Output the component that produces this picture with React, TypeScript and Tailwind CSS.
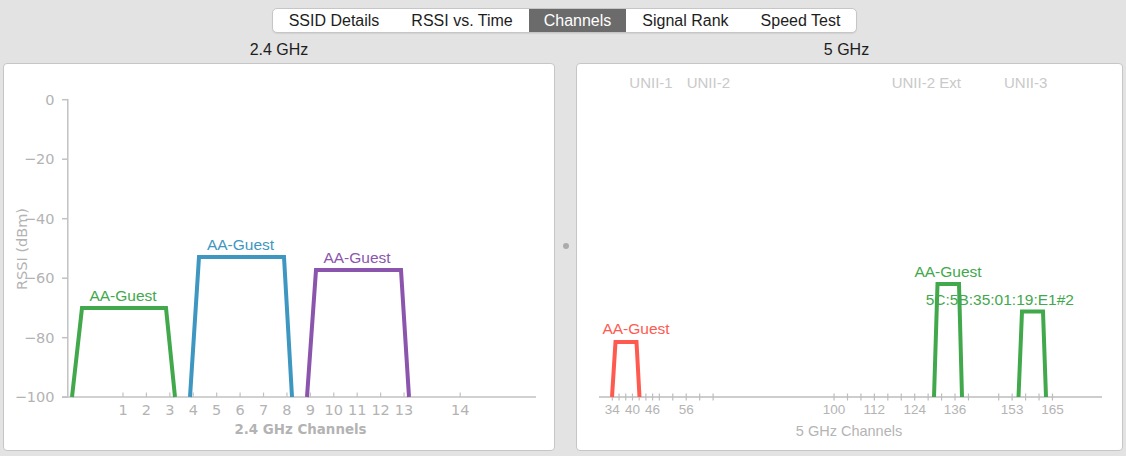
import React from "react";

const tabs = ["SSID Details", "RSSI vs. Time", "Channels", "Signal Rank", "Speed Test"];

// 2.4 GHz: channel -> x on the page
const ch24 = (c: number) => (c === 14 ? 460.2 : 123 + (c - 1) * 23.42);
// 5 GHz: channel -> x on the page
const ch5 = (c: number) => 612.3 + (c - 34) * 3.36;

const yTicks = [0, -20, -40, -60, -80, -100];
const yOf = (v: number) => 100.7 - (v / 20) * 59.5;

const ticks5 = [34, 36, 38, 40, 42, 44, 46, 48, 52, 56, 60, 64, 100, 104, 108, 112, 116, 120, 124, 128, 132, 136, 140, 149, 153, 157, 161, 165];
const labels5 = [34, 40, 46, 56, 100, 112, 124, 136, 153, 165];

const left24 = [
  { color: "#42a84c", points: "72,398 82,309 166,309 175,398", label: { x: 123, y: 302 } },
  { color: "#3e97c1", points: "190,398 199,258 284,258 292,398", label: { x: 240.5, y: 251 } },
  { color: "#8b55ad", points: "307,398 316,271 401,271 409,398", label: { x: 357, y: 264 } },
];

const right5 = [
  { color: "#ff5a50", points: "612,398 615.5,343 636.5,343 639.5,398" },
  { color: "#42a84c", points: "934,398 937.5,285 959,285 962,398" },
  { color: "#42a84c", points: "1018.5,398 1022,312.5 1043,312.5 1046,398" },
];

const Chart24 = () => (
  <svg width={550} height={386} viewBox="4 65 550 386" className="block">
    <g fontFamily="'DejaVu Sans', Verdana, sans-serif" fill="#b3b3b3">
      {yTicks.map((v) => (
        <g key={v}>
          <line x1={62} x2={68} y1={yOf(v)} y2={yOf(v)} stroke="#c2c2c2" strokeWidth={1.5} />
          <text x={54.5} y={yOf(v) + 5.2} fontSize={14.5} textAnchor="end">
            {v === 0 ? "0" : "\u2212" + Math.abs(v)}
          </text>
        </g>
      ))}
      <line x1={67.8} x2={67.8} y1={100} y2={398} stroke="#c2c2c2" strokeWidth={1.5} />
      <line x1={62} x2={536} y1={398} y2={398} stroke="#c2c2c2" strokeWidth={1.5} />
      {Array.from({ length: 14 }, (_, i) => i + 1).map((c) => (
        <g key={c}>
          <line x1={ch24(c)} x2={ch24(c)} y1={393.5} y2={398} stroke="#c2c2c2" strokeWidth={1.2} />
          <text x={ch24(c)} y={416.3} fontSize={14.5} textAnchor="middle">
            {c}
          </text>
        </g>
      ))}
      <text x={300.5} y={435} fontSize={13.4} fontWeight="bold" textAnchor="middle">
        2.4 GHz Channels
      </text>
      <text x={0} y={0} fontSize={14.5} textAnchor="middle" transform="translate(27 250) rotate(-90)">
        RSSI (dBm)
      </text>
    </g>
    {left24.map((p, i) => (
      <g key={i}>
        <polyline points={p.points} fill="none" stroke={p.color} strokeWidth={4} />
        <text
          x={p.label.x}
          y={p.label.y}
          fill={p.color}
          fontSize={15.5}
          textAnchor="middle"
          fontFamily="'Liberation Sans', Arial, sans-serif"
        >
          AA-Guest
        </text>
      </g>
    ))}
  </svg>
);

const Chart5 = () => (
  <svg width={545} height={386} viewBox="577 65 545 386" className="block">
    <g fontFamily="'Liberation Sans', Arial, sans-serif">
      <g fill="#c9c9c9" fontSize={15}>
        <text x={629.3} y={89}>UNII-1</text>
        <text x={686.7} y={89}>UNII-2</text>
        <text x={891.7} y={89}>UNII-2 Ext</text>
        <text x={1004} y={89}>UNII-3</text>
      </g>
      <line x1={599} x2={1102} y1={398} y2={398} stroke="#bdbdbd" strokeWidth={1.5} />
      {ticks5.map((c) => (
        <line key={c} x1={ch5(c)} x2={ch5(c)} y1={394.5} y2={401.5} stroke="#bdbdbd" strokeWidth={1.2} />
      ))}
      {labels5.map((c) => (
        <text key={c} x={ch5(c)} y={414.5} fontSize={13.5} fill="#b4b4b4" textAnchor="middle">
          {c}
        </text>
      ))}
      <text x={849} y={436.7} fontSize={14.5} fill="#b4b4b4" textAnchor="middle">
        5 GHz Channels
      </text>
      {right5.map((p, i) => (
        <polyline key={i} points={p.points} fill="none" stroke={p.color} strokeWidth={4} />
      ))}
      <g fontSize={15.5}>
        <text x={636} y={334.8} fill="#ff5a50" textAnchor="middle">
          AA-Guest
        </text>
        <text x={948} y={278.2} fill="#42a84c" textAnchor="middle">
          AA-Guest
        </text>
        <text x={925.7} y={305.5} fill="#42a84c">
          5C:5B:35:01:19:E1#2
        </text>
      </g>
    </g>
  </svg>
);

export default function App() {
  return (
    <div className="flex h-[456px] w-[1126px] flex-col overflow-hidden bg-[#e3e3e3] font-['Liberation_Sans',Arial,sans-serif]">
      <div className="flex justify-center pt-[8px]">
        <div className="ml-[3px] flex h-[25px] overflow-hidden rounded-[5px] border border-[#c6c6c6] bg-white shadow-[0_1px_1px_rgba(0,0,0,0.08)]">
          {tabs.map((t) => (
            <div
              key={t}
              className={
                t === "Channels"
                  ? "flex items-center bg-[#6b6b6b] px-[15px] text-[16px] leading-none text-white"
                  : "flex items-center px-4 text-[16px] leading-none text-[#1d1d1d]"
              }
            >
              {t}
            </div>
          ))}
        </div>
      </div>

      <div className="flex px-[3px] pt-[8px]">
        <div className="flex w-[552px] flex-col">
          <div className="h-[18px] text-center text-[16px] leading-[18px] text-[#1d1d1d]">2.4 GHz</div>
          <div className="mt-[4px] h-[388px] rounded-[4px] border border-[#c6c6c6] bg-white">
            <Chart24 />
          </div>
        </div>

        <div className="flex w-[21px] items-center justify-center">
          <div className="h-[6px] w-[6px] rounded-full bg-[#ababab]" />
        </div>

        <div className="flex w-[547px] flex-col">
          <div className="h-[18px] pr-[6px] text-center text-[16px] leading-[18px] text-[#1d1d1d]">5 GHz</div>
          <div className="mt-[4px] h-[388px] rounded-[4px] border border-[#c6c6c6] bg-white">
            <Chart5 />
          </div>
        </div>
      </div>
    </div>
  );
}
